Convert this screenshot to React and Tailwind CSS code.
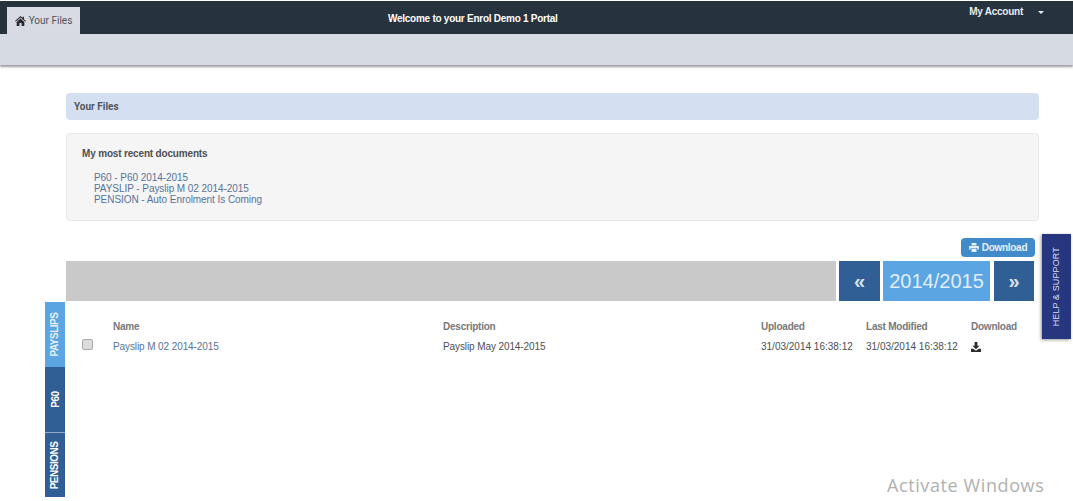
const sans = "font-['Liberation_Sans',Arial,sans-serif]";

const recent = [
    "P60 - P60 2014-2015",
    "PAYSLIP - Payslip M 02 2014-2015",
    "PENSION - Auto Enrolment Is Coming",
];

const sideTabs = [
    { label: "PAYSLIPS", bg: "bg-[#5aa5e2]", text: "text-[#e8f1fa]" },
    { label: "P60", bg: "bg-[#2f5f95]", text: "text-white" },
    { label: "PENSIONS", bg: "bg-[#2f5f95] border-t border-[#8fa9c6]", text: "text-white" },
];

function HomeIcon() {
    return (
        <svg viewBox="0 0 12 11" className="w-[11px] h-[10px] fill-[#26292e]">
            <path d="M6 0 0 5.6l.7.8L6 1.6l5.3 4.8.7-.8L9.8 3.6V.8H8.3v1.4z" />
            <path d="M6 2.7 1.8 6.5V11h3V7.6h2.4V11h3V6.5z" />
        </svg>
    );
}

function PrintIcon() {
    return (
        <svg viewBox="0 0 12 11" className="w-[10px] h-[9px] fill-[#e6f0f8]">
            <path d="M3 0h6v3H3z" />
            <path d="M0 3.6h12V8h-2V6H2v2H0z" />
            <path d="M3 6.8h6V11H3z" />
        </svg>
    );
}

function DownloadIcon() {
    return (
        <svg viewBox="0 0 11 11" className="w-[10px] h-[10px] fill-[#2a2a2a]">
            <path d="M4 0h3v4h2.4L5.5 8 1.6 4H4z" />
            <path d="M0 7.4h2.6l2.9 2.2 2.9-2.2H11V11H0z" />
        </svg>
    );
}

function Header() {
    return (
        <header>
            <div className="h-[33px] mt-px bg-[#26323e] flex items-end">
                <div className="ml-[7px] w-[73px] h-[27px] bg-[#d8dbe3] flex items-center justify-center gap-[3px] text-[10px] text-[#50545a]">
                    <HomeIcon />
                    <span className="font-['Roboto',sans-serif]">Your Files</span>
                </div>
                <span className="ml-[308px] mb-[8px] tracking-[-0.26px] font-bold text-white">Welcome to your Enrol Demo 1 Portal</span>
                <span className="ml-auto mb-[15px] tracking-[-0.25px] font-bold text-[#e6ecf2]">My Account</span>
                <span className="ml-[15px] mr-[29px] mb-[20px] border-x-[3px] border-t-[3px] border-x-transparent border-t-[#e6ecf2]" />
            </div>
            <div className="h-[31px] bg-[#d6dae3] shadow-[0_2px_2px_rgba(90,90,90,0.6)]" />
        </header>
    );
}

function Row({ cols, className }) {
    return (
        <div className={`grid grid-cols-[47px_330px_318px_105px_105px_auto] items-center ${className}`}>
            {cols}
        </div>
    );
}

export default function App() {
    return (
        <div className={`relative w-[1073px] h-[501px] overflow-hidden bg-white text-[10px] text-[#4b4f54] ${sans}`}>
            <Header />

            <main className="ml-[66px] w-[973px] mt-[28px]">
                <div className="h-[27px] px-2 flex items-center bg-[#d4e0f1] rounded-sm font-bold text-[#50555b] font-['Roboto',sans-serif]">
                    Your Files
                </div>

                <div className="mt-[13px] h-[88px] pl-[15px] pt-[14px] bg-[#f5f5f5] border border-[#e8e8e8] rounded-sm">
                    <div className="tracking-[-0.17px] font-bold text-[#4e4f51] leading-[12px]">My most recent documents</div>
                    <ul className="mt-[12px] ml-3 leading-[11px] tracking-[-0.06px] text-[#587399]">
                        {recent.map((doc) => (
                            <li key={doc}>{doc}</li>
                        ))}
                    </ul>
                </div>

                <div className="mt-[17px] flex justify-end pr-1">
                    <button className="w-[74px] h-[19px] flex items-center justify-center gap-[3px] bg-[#418bca] rounded-sm tracking-[-0.3px] font-bold text-[#e6f0f8]">
                        <PrintIcon />
                        Download
                    </button>
                </div>

                <div className="mt-1 h-10 flex">
                    <div className="w-[770px] bg-[#c9c9c9]" />
                    <div className="ml-[3px] w-[41px] bg-[#2f5f95] flex items-center justify-center text-[20px] font-bold text-[#d5e2ef]">«</div>
                    <div className="ml-[3px] w-[107px] bg-[#5aa5e2] flex items-center justify-center text-[20px] text-[#e0eef9]">2014/2015</div>
                    <div className="ml-1 w-10 bg-[#2f5f95] flex items-center justify-center text-[20px] font-bold text-[#d5e2ef]">»</div>
                </div>

                <Row
                    className="mt-[18px] h-3 tracking-[-0.23px] font-bold text-[#77797c]"
                    cols={
                        <>
                            <span />
                            <span>Name</span>
                            <span>Description</span>
                            <span>Uploaded</span>
                            <span>Last Modified</span>
                            <span>Download</span>
                        </>
                    }
                />
                <Row
                    className="mt-[8px] h-3"
                    cols={
                        <>
                            <span className="ml-4 w-[11px] h-[11px] mb-[4px] rounded-[2px] bg-[#dcdcdc] border border-[#a9a9a9]" />
                            <span className="tracking-[-0.1px] text-[#587399]">Payslip M 02 2014-2015</span>
                            <span className="tracking-[-0.1px]">Payslip May 2014-2015</span>
                            <span>31/03/2014 16:38:12</span>
                            <span>31/03/2014 16:38:12</span>
                            <DownloadIcon />
                        </>
                    }
                />
            </main>

            {/* side tabs sit over the page edge */}
            <nav className="absolute left-[45px] top-[302px] w-5 flex flex-col">
                {sideTabs.map((tab) => (
                    <div key={tab.label} className={`h-[65px] flex items-center justify-center ${tab.bg}`}>
                        <span className={`-rotate-90 whitespace-nowrap tracking-[-0.5px] font-bold ${tab.text}`}>{tab.label}</span>
                    </div>
                ))}
            </nav>

            <div className="absolute right-[2px] top-[234px] w-[29px] h-[105px] bg-[#27377f] shadow-[-1px_1px_3px_rgba(0,0,0,0.4)] flex items-center justify-center">
                <span className="-rotate-90 whitespace-nowrap text-[9px] tracking-[0.1px] text-[#d8dcec]">HELP &amp; SUPPORT</span>
            </div>

            <div className="absolute left-[887px] top-[473px] text-[18px] leading-[25px] tracking-[0.6px] text-[#b0b0b0] font-['Open_Sans',sans-serif]">
                Activate Windows
            </div>
        </div>
    );
}
